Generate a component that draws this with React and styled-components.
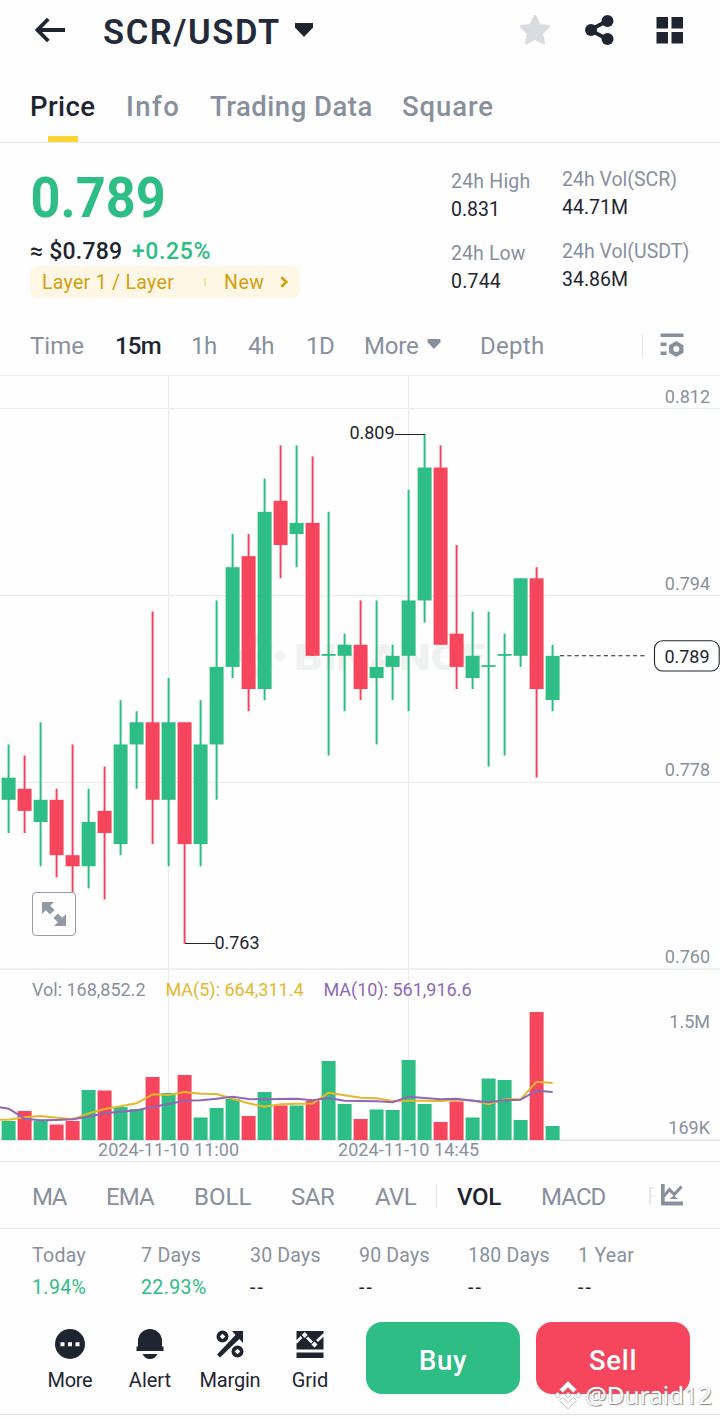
import React from "react";
import styled, { createGlobalStyle } from "styled-components";

const c = {
  ink: "#1e2530",
  muted: "#88909d",
  green: "#2ebd85",
  red: "#f6465d",
  line: "#e9eaec",
  yellow: "#fcd535",
  gold: "#d19f10",
};

const Global = createGlobalStyle`
  * { box-sizing: border-box; }
  body { margin: 0; background: #fefefe; font-family: Roboto, "Liberation Sans", sans-serif; color: ${c.ink}; }
  svg { display: block; }
`;

const Screen = styled.main`
  position: relative;
  width: 720px;
  height: 1419px;
  overflow: hidden;
  display: flex;
  flex-direction: column;
  white-space: nowrap;
`;

const Label = styled.span`
  letter-spacing: ${(p) => p.$ls || 0}px;
`;

const Header = styled.header`
  height: 62px;
  padding: 0 0 2px 35px;
  display: grid;
  grid-template-columns: 68px 191px 225px 66px 71px 30px;
  align-items: center;
`;

const Pair = styled.h1`
  margin: 4px 0 0;
  font-size: 34.5px;
  line-height: 40px;
  font-weight: 600;
  letter-spacing: ${(p) => p.$ls}px;
  color: #232b3a;
`;

const Tabs = styled.nav`
  height: 81px;
  padding-left: 30px;
  display: grid;
  grid-template-columns: 96px 84px 192px 120px;
  border-bottom: 1px solid ${c.line};
`;

const Tab = styled.div`
  position: relative;
  padding-top: 29px;
  font-size: 27.5px;
  line-height: 32px;
  font-weight: 500;
  color: ${(p) => (p.$active ? c.ink : c.muted)};
  &::after {
    content: "";
    display: ${(p) => (p.$active ? "block" : "none")};
    position: absolute;
    left: 18px;
    bottom: 0;
    width: 30px;
    height: 6px;
    background: ${c.yellow};
  }
`;

const Summary = styled.section`
  height: 175px;
  padding-left: 30px;
  display: grid;
  grid-template-columns: 421px 111px 150px;
`;

const PriceColumn = styled.div`
  display: flex;
  flex-direction: column;
  align-items: flex-start;
`;

const LastPrice = styled.div`
  margin-top: 25px;
  height: 60px;
  font-size: 55px;
  line-height: 60px;
  font-weight: 700;
  color: ${c.green};
  transform: scaleX(0.95);
  transform-origin: 12px 50%;
`;

const Change = styled.div`
  margin-top: 10px;
  height: 27px;
  display: grid;
  grid-template-columns: 102px 90px;
  font-size: 23px;
  line-height: 27px;
  font-weight: 500;
`;

const Up = styled.span`
  color: ${c.green};
`;

const Tag = styled.div`
  margin-top: 1px;
  width: 270px;
  height: 32px;
  padding-left: 12px;
  display: grid;
  grid-template-columns: 162px 20px 56px 12px;
  align-items: center;
  border-radius: 8px;
  background: #fef7e5;
  color: ${c.gold};
  font-size: 19.5px;
`;

const TagDivider = styled.i`
  width: 2px;
  height: 8px;
  background: #f3dfa8;
`;

const StatColumn = styled.dl`
  margin: ${(p) => p.$top}px 0 0;
  font-size: 19.5px;
`;

const StatName = styled.dt`
  height: 28px;
  line-height: 28px;
  color: ${c.muted};
`;

const StatValue = styled.dd`
  margin: 0 0 16px;
  height: 28px;
  line-height: 28px;
`;

const Intervals = styled.nav`
  height: 57px;
  padding: 0 0 2px 30px;
  display: grid;
  grid-template-columns: 85px 76px 57px 58px 58px 63px 53px 162px 18px 30px;
  align-items: center;
  font-size: 24px;
  color: ${c.muted};
`;

const Interval = styled.span`
  padding-top: 1px;
  letter-spacing: ${(p) => p.$ls || 0}px;
  font-weight: ${(p) => (p.$active ? 500 : 400)};
  color: ${(p) => (p.$active ? c.ink : "inherit")};
`;

const CaretSlot = styled.span`
  padding-bottom: 3px;
`;

const IconSlot = styled.span`
  padding-bottom: 2px;
`;

const Rule = styled.i`
  width: 1px;
  height: 24px;
  background: #e4e6e9;
`;

const ChartArea = styled.section`
  position: relative;
  height: 787px;
  border-bottom: 1px solid ${c.line};
`;

const ExpandButton = styled.button`
  position: absolute;
  left: 32px;
  top: 517px;
  width: 44px;
  height: 44px;
  padding: 0;
  display: grid;
  place-items: center;
  border: 1px solid #979ea9;
  border-radius: 4px;
  background: #fefefe;
`;

const Indicators = styled.nav`
  height: 67px;
  padding: 2px 0 0 32px;
  display: grid;
  grid-template-columns: 74px 88px 97px 84px 61px 21px 84px 106px 13px 30px;
  align-items: center;
  border-bottom: 1px solid ${c.line};
  font-size: 24px;
  color: ${c.muted};
`;

const Lift = styled.span`
  padding-bottom: 3px;
`;

const FadingOut = styled.span`
  background: linear-gradient(90deg, #d9dce0, transparent 10px);
  background-clip: text;
  color: transparent;
`;

const Periods = styled.section`
  height: 76px;
  padding: 11px 0 0 32px;
  display: grid;
  grid-template-columns: 109px 109px 109px 109px 110px 100px;
`;

const Period = styled.div`
  display: flex;
  flex-direction: column;
  font-size: 19.5px;
  line-height: 32px;
  color: ${c.muted};
`;

const PeriodValue = styled.span`
  letter-spacing: ${(p) => (p.$up ? 0.4 : 2)}px;
  color: ${(p) => (p.$up ? c.green : c.ink)};
`;

const Actions = styled.footer`
  height: 110px;
  padding: 17px 0 0 30px;
  display: grid;
  grid-template-columns: 80px 80px 80px 96px 170px 154px;
  border-bottom: 1px solid #dfe1e4;
`;

const Action = styled.div`
  width: 80px;
  padding-top: 7px;
  display: flex;
  flex-direction: column;
  align-items: center;
  gap: 9px;
  font-size: 20px;
  line-height: 24px;
`;

const TradeButton = styled.button`
  width: 154px;
  height: 72px;
  padding: 4px 0 0;
  border: 0;
  border-radius: 16px;
  background: ${(p) => p.color};
  color: #fff;
  font: 500 27.5px Roboto, sans-serif;
  letter-spacing: 0.7px;
`;

const Signature = styled.div`
  position: absolute;
  left: 554px;
  top: 1378px;
  display: grid;
  grid-template-columns: 31px 130px;
  align-items: center;
  font: 24.3px/34px "Noto Sans", sans-serif;
  color: #fff;
  text-shadow: 0 0 1px #999, 1px 1px 1px #888;
`;

/* side, high, body top, body bottom, low — in ticks of 0.001 below 0.809 */
const candles = [
  ["g", 28, 31, 33, 36], ["r", 29, 32, 34, 36], ["g", 26, 33, 35, 39], ["r", 32, 33, 38, 40],
  ["r", 28, 38, 39, 42], ["g", 32, 35, 39, 41], ["r", 30, 34, 36, 42], ["g", 24, 28, 37, 38],
  ["g", 25, 26, 28, 32], ["r", 16, 26, 33, 37], ["g", 22, 26, 33, 39], ["r", 26, 26, 37, 46],
  ["g", 24, 28, 37, 39], ["g", 15, 21, 28, 33], ["g", 9, 12, 21, 22], ["r", 9, 11, 23, 25],
  ["g", 4, 7, 23, 24], ["r", 1, 6, 10, 13], ["g", 1, 8, 9, 12], ["r", 2, 8, 20, 20],
  ["g", 7, 20, 20, 29], ["g", 18, 19, 20, 25], ["r", 15, 19, 23, 24], ["g", 15, 21, 22, 28],
  ["g", 19, 20, 21, 24], ["g", 5, 15, 20, 25], ["g", 0, 3, 15, 17], ["r", 1, 3, 19, 19],
  ["r", 10, 18, 21, 23], ["g", 16, 20, 22, 23], ["g", 16, 21, 21, 30], ["g", 18, 20, 20, 29],
  ["g", 13, 13, 20, 21], ["r", 12, 13, 23, 31], ["g", 19, 20, 24, 25],
];

const volumes = [
  19, 29, 19, 15.5, 19, 50, 49.5, 33, 31, 63, 47, 65, 22.5, 32, 41, 24, 48, 34.5, 34.5, 39, 79,
  36, 21, 30.5, 30, 80, 36, 18, 38.5, 22.5, 61.5, 60, 20, 128, 14,
];

const ma5 = [
  449, 442, 438, 443, 448, 430, 417, 409, 400, 373, 375, 366, 371, 372, 386, 400, 410, 403, 401,
  401, 368, 376, 383, 385, 393, 392, 392, 393, 389, 391, 403, 388, 388, 335, 339,
];
const ma10 = [
  416, 446, 451, 450, 448, 440, 430, 425, 421, 411, 402, 392, 391, 386, 380, 387, 388, 387, 386,
  391, 384, 392, 393, 394, 397, 380, 384, 388, 386, 392, 397, 391, 389, 362, 366,
];

const priceY = (tick) => 59.3 + tick * 11.076;
const linePoints = (first, values) =>
  `0,${595 + first / 3} ` + values.map((v, i) => `${8.6 + i * 16},${595 + v / 3}`).join(" ");

function Chart() {
  return (
    <svg width="720" height="786" viewBox="0 0 720 786" fontFamily="Roboto, sans-serif" fontSize="18">
      <g fill="#eceded">
        <rect y="-0.5" width="720" height="1.5" />
        <rect y="33" width="720" height="1.3" />
        <rect y="220" width="720" height="1.3" />
        <rect y="406.7" width="720" height="1.3" />
        <rect y="593.3" width="720" height="1.5" />
        <rect y="764.3" width="720" height="1.7" fill="#e4e6e7" />
        <rect x="168" width="1.2" height="765" />
        <rect x="408" width="1.2" height="765" />
      </g>
      <g fill="#f0f1f1">
        <path d="M280 274.5l5.5 6.5-5.5 6.5-5.5-6.5zM260 257l14 14-5 5-9-9-9 9-5-5zM260 305l14-14-5-5-9 9-9-9-5 5zM240 275l6 6-6 6-6-6zM260 275l6 6-6 6-6-6z" />
        <text x="294" y="294.5" fontSize="37.5" fontWeight="900" textLength="191" lengthAdjust="spacingAndGlyphs">BINANCE</text>
      </g>
      {candles.map(([side, high, top, bottom, low], i) => {
        const x = 8.6 + i * 16;
        const doji = top === bottom;
        return (
          <g key={i} fill={side === "g" ? c.green : c.red}>
            <rect x={x - 1} y={priceY(high)} width="2" height={priceY(low) - priceY(high)} />
            <rect
              x={x - 7}
              y={doji ? priceY(top) - 1.8 : priceY(top)}
              width="14"
              height={doji ? 1.8 : priceY(bottom) - priceY(top)}
            />
            <rect x={x - 7} y={765 - volumes[i]} width="14" height={volumes[i]} />
          </g>
        );
      })}
      <g fill="none" strokeWidth="2" strokeLinejoin="round">
        <polyline stroke="#e6b72d" points={linePoints(449, ma5)} />
        <polyline stroke="#8d68b8" points={linePoints(412, ma10)} />
      </g>
      <g stroke={c.ink} strokeWidth="1.1" fill="none">
        <path d="M395 59.5h30M185 568.5h30" />
        <path d="M560 280.8h85" strokeDasharray="4.2 3.1" />
        <rect x="654.5" y="265.7" width="64.7" height="30.3" rx="8" fill="#fefefe" />
      </g>
      <g fill={c.ink}>
        <text x="349.5" y="64" textLength="45">0.809</text>
        <text x="214.5" y="574" textLength="45">0.763</text>
        <text x="664.5" y="287.5" textLength="45">0.789</text>
      </g>
      <g fill={c.muted}>
        <g textAnchor="end">
          <text x="710" y="28">0.812</text>
          <text x="710" y="215">0.794</text>
          <text x="710" y="401">0.778</text>
          <text x="710" y="588">0.760</text>
          <text x="710" y="653">1.5M</text>
          <text x="710" y="759">169K</text>
        </g>
        <text x="32" y="621" textLength="113.5">Vol: 168,852.2</text>
        <text x="98" y="781" textLength="141">2024-11-10 11:00</text>
        <text x="338" y="781" textLength="141">2024-11-10 14:45</text>
      </g>
      <text x="165.5" y="621" textLength="138" fill="#e6b72d">MA(5): 664,311.4</text>
      <text x="323.5" y="621" textLength="148" fill="#8d68b8">MA(10): 561,916.6</text>
    </svg>
  );
}

const Caret = ({ w, h, color }) => (
  <svg width={w} height={h} viewBox="0 0 18 14">
    <path fill={color} d="M0 0h18v4.5L9 14 0 4.5z" />
  </svg>
);

const BackIcon = () => (
  <svg width="30" height="26" viewBox="0 0 30 26" fill="none" stroke={c.ink} strokeWidth="3.8">
    <path d="M30 13H3M13.3 2L2.5 13l10.8 11" />
  </svg>
);

const StarIcon = () => (
  <svg width="32" height="32" viewBox="0 0 32 32">
    <path
      d="M16 2.5l4.2 9 9.3 1.1-6.9 6.6 2 9.8L16 24.3 7.4 29l2-9.8-6.9-6.6 9.3-1.1z"
      fill="#d9dce1" stroke="#d9dce1" strokeWidth="3" strokeLinejoin="round"
    />
  </svg>
);

const ShareIcon = () => (
  <svg width="30" height="30" viewBox="0 0 30 30" fill={c.ink}>
    <path d="M22 6L5 15l17 9" fill="none" stroke={c.ink} strokeWidth="3.8" />
    <circle cx="6" cy="15" r="6" /><circle cx="22.5" cy="6" r="6" /><circle cx="22.5" cy="24" r="6" />
  </svg>
);

const GridIcon = () => (
  <svg width="28" height="28" viewBox="0 0 28 28" fill={c.ink}>
    <path d="M.5 1h11.5v11.5H.5zM15.5 1H27v11.5H15.5zM.5 16h11.5v11.5H.5zM15.5 16H27v11.5H15.5z" />
  </svg>
);

const ChevronIcon = () => (
  <svg width="9" height="12" viewBox="0 0 9 12" fill="none" stroke={c.gold} strokeWidth="2.6">
    <path d="M1.3 1.2L6.3 6l-5 4.8" />
  </svg>
);

const ChartSettingsIcon = () => (
  <svg width="24" height="26" viewBox="0 0 24 26" fill={c.muted}>
    <path d="M.5 1.5h23V5H.5zM.5 10.500h6V14h-6zM.5 19.500h6V23h-6z" />
    <path fillRule="evenodd" d="M16.3 9l7.2 4.2v7.6L16.3 25l-7.2-4.2v-7.6zM16.3 14a3 3 0 100 6 3 3 0 000-6z" />
  </svg>
);

const TrendIcon = () => (
  <svg width="24" height="24" viewBox="0 0 24 24" fill={c.muted}>
    <path d="M1 1h3.7v17.500H23V22.500H1z" />
    <path d="M4 13l5.5-6.5 4.8 5L21.500 3.500" fill="none" stroke={c.muted} strokeWidth="3" />
    <path d="M9.5 16h8.500l-4.2-3.600z" />
  </svg>
);

const MoreIcon = () => (
  <svg width="30" height="30" viewBox="0 0 30 30">
    <circle cx="15" cy="15" r="15" fill={c.ink} />
    <path fill="#fff" d="M5.5 13.2h4v4h-4zM13 13.2h4v4h-4zM20.5 13.2h4v4h-4z" />
  </svg>
);

const BellIcon = () => (
  <svg width="30" height="30" viewBox="0 0 30 30" fill={c.ink}>
    <path d="M3 12a12 12 0 0124 0v5.5h1.5V22h-27v-4.5H3zM7.5 25h15c-1.5 3-4 5-7.5 5s-6-2-7.5-5z" />
  </svg>
);

const MarginIcon = () => (
  <svg width="30" height="30" viewBox="0 0 30 30" fill={c.ink}>
    <path d="M17 2h11v12l-3.7-3.900L5 28.500 2 25.500 20.500 6z" />
    <path fillRule="evenodd" d="M7.5 1.5a6 6 0 100 12 6 6 0 000-12zm0 3.200l2.800 2.800-2.800 2.800-2.800-2.800zM22.500 16.500a6 6 0 100 12 6 6 0 000-12zm0 3.200l2.800 2.800-2.800 2.800-2.800-2.800z" />
  </svg>
);

const TradeGridIcon = () => (
  <svg width="30" height="30" viewBox="0 0 30 30" fill={c.ink}>
    <path d="M1.5 2h27v18.500h-27zM1.5 23.500h27V29h-27z" />
    <path d="M1 13.500l5.500-5.500M12 8.500l5 5M22 12l7-6.500" fill="none" stroke="#fff" strokeWidth="2.6" />
    <path fill="#fff" d="M9.700 3l3 3-3 3-3-3zM19.500 12.500l3 3-3 3-3-3z" />
  </svg>
);

const ExpandIcon = () => (
  <svg width="24" height="24" viewBox="0 0 24 24" fill="#929aa6">
    <path d="M0 0h12L8.200 3.800l4.300 4.300-4.400 4.400-4.300-4.300L0 12zM24 24H12l3.800-3.800-4.300-4.300 4.400-4.400 4.300 4.300L24 12z" />
    <path d="M8.500 15.500l7-7" stroke="#fefefe" strokeWidth="1.2" />
  </svg>
);

const BinanceMark = () => (
  <svg width="28" height="30" viewBox="0 0 28 30" fill="#fff" stroke="#999" strokeWidth=".6">
    <path d="M14 1l8.5 8.5-3.2 3.2L14 7.4l-5.3 5.3-3.2-3.2zM14 29l8.5-8.5-3.2-3.2-5.3 5.3-5.3-5.3-3.2 3.2zM3.5 12l3 3-3 3-3-3zM24.5 12l3 3-3 3-3-3zM14 12l3 3-3 3-3-3z" />
  </svg>
);

export default function App() {
  return (
    <Screen>
      <Global />
      <Header>
        <BackIcon />
        <Pair $ls={1.6}>SCR/USDT</Pair>
        <Caret w={20} h={14} color={c.ink} />
        <StarIcon />
        <ShareIcon />
        <GridIcon />
      </Header>
      <Tabs>
        <Tab $active><Label $ls={0.4}>Price</Label></Tab>
        <Tab><Label $ls={1.5}>Info</Label></Tab>
        <Tab><Label $ls={0.5}>Trading Data</Label></Tab>
        <Tab><Label $ls={0.9}>Square</Label></Tab>
      </Tabs>
      <Summary>
        <PriceColumn>
          <LastPrice>0.789</LastPrice>
          <Change><Label $ls={0.2}>≈ $0.789</Label><Up><Label $ls={0.6}>+0.25%</Label></Up></Change>
          <Tag>
            <Label $ls={0.3}>Layer 1 / Layer</Label><TagDivider /><Label $ls={0.5}>New</Label><ChevronIcon />
          </Tag>
        </PriceColumn>
        <StatColumn $top={25}>
          <StatName><Label $ls={0.2}>24h High</Label></StatName><StatValue><Label>0.831</Label></StatValue>
          <StatName><Label $ls={0.1}>24h Low</Label></StatName><StatValue><Label $ls={0.2}>0.744</Label></StatValue>
        </StatColumn>
        <StatColumn $top={23}>
          <StatName><Label>24h Vol(SCR)</Label></StatName><StatValue><Label>44.71M</Label></StatValue>
          <StatName><Label>24h Vol(USDT)</Label></StatName><StatValue><Label>34.86M</Label></StatValue>
        </StatColumn>
      </Summary>
      <Intervals>
        <Interval>Time</Interval>
        <Interval $active $ls={-0.8}>15m</Interval>
        <Interval $ls={-0.5}>1h</Interval>
        <Interval $ls={-0.3}>4h</Interval>
        <Interval $ls={-0.5}>1D</Interval>
        <Interval $ls={-0.2}>More</Interval>
        <CaretSlot><Caret w={14} h={10} color={c.muted} /></CaretSlot>
        <Interval $ls={0.3}>Depth</Interval>
        <Rule />
        <IconSlot><ChartSettingsIcon /></IconSlot>
      </Intervals>
      <ChartArea>
        <Chart />
        <ExpandButton><ExpandIcon /></ExpandButton>
      </ChartArea>
      <Indicators>
        <Interval $ls={-1.5}>MA</Interval>
        <Interval $ls={-0.9}>EMA</Interval>
        <Interval>BOLL</Interval>
        <Interval $ls={-0.4}>SAR</Interval>
        <Interval $ls={-0.6}>AVL</Interval>
        <Rule />
        <Interval $active $ls={-0.3}>VOL</Interval>
        <Interval $ls={-0.9}>MACD</Interval>
        <FadingOut>R</FadingOut>
        <Lift><TrendIcon /></Lift>
      </Indicators>
      <Periods>
        <Period><Label $ls={0.3}>Today</Label><PeriodValue $up>1.94%</PeriodValue></Period>
        <Period><Label $ls={0.3}>7 Days</Label><PeriodValue $up>22.93%</PeriodValue></Period>
        <Period><Label $ls={0.2}>30 Days</Label><PeriodValue>--</PeriodValue></Period>
        <Period><Label $ls={0.2}>90 Days</Label><PeriodValue>--</PeriodValue></Period>
        <Period><Label $ls={0.2}>180 Days</Label><PeriodValue>--</PeriodValue></Period>
        <Period><Label $ls={0.3}>1 Year</Label><PeriodValue>--</PeriodValue></Period>
      </Periods>
      <Actions>
        <Action><MoreIcon /><Label $ls={-0.3}>More</Label></Action>
        <Action><BellIcon /><Label>Alert</Label></Action>
        <Action><MarginIcon /><Label $ls={-0.2}>Margin</Label></Action>
        <Action><TradeGridIcon /><Label>Grid</Label></Action>
        <TradeButton color={c.green}>Buy</TradeButton>
        <TradeButton color={c.red}>Sell</TradeButton>
      </Actions>
      <Signature><BinanceMark /><Label>@Duraid12</Label></Signature>
    </Screen>
  );
}
